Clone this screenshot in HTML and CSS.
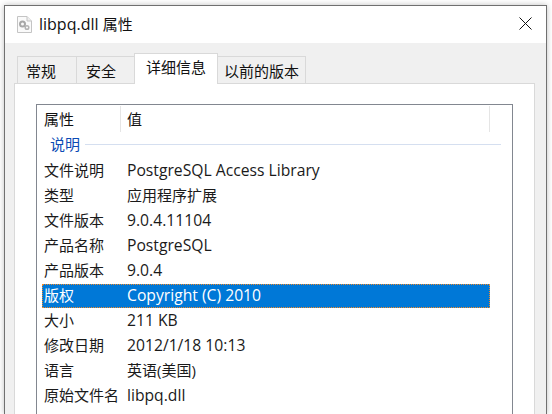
FILE: index.html
```html
<!DOCTYPE html>
<html lang="zh-CN">
<head>
<meta charset="utf-8">
<title>libpq.dll 属性</title>
<link rel="stylesheet" href="styles.css">
</head>
<body>
<div class="window">
  <div class="titlebar">
    <svg class="file-icon" width="15" height="17" viewBox="0 0 15 17">
      <path d="M.5.5H10L14.5 5V16.500H.5Z" fill="#fafafa" stroke="#c4c4c4"/>
      <path d="M10 .5V5H14.500" fill="#eee" stroke="#c4c4c4"/>
      <circle cx="5.500" cy="8" r="2.500" fill="none" stroke="#a8a8a8" stroke-width="2"/>
      <circle cx="10" cy="11.500" r="1.800" fill="none" stroke="#b4b4b4" stroke-width="1.500"/>
    </svg>
    <span class="title">libpq.dll <span class="cjk">属性</span></span>
    <svg class="close" width="13" height="13" viewBox="0 0 13 13">
      <path d="M.5.5L12.500 12.500M12.500.5L.5 12.500" stroke="#111" stroke-width="1" fill="none"/>
    </svg>
  </div>
  <div class="body">
    <div class="tabs">
      <div class="tab t1">常规</div>
      <div class="tab t2">安全</div>
      <div class="tab active">详细信息</div>
      <div class="tab t4">以前的版本</div>
    </div>
    <div class="panel">
      <div class="list">
        <div class="head">
          <div class="hcell c1">属性</div>
          <div class="hcell c2">值</div>
        </div>
        <div class="group"><span>说明</span><i class="rule"></i></div>
        <div class="row"><span class="k">文件说明</span><span class="v">PostgreSQL Access Library</span></div>
        <div class="row"><span class="k">类型</span><span class="v cjk">应用程序扩展</span></div>
        <div class="row"><span class="k">文件版本</span><span class="v">9.0.4.11104</span></div>
        <div class="row"><span class="k">产品名称</span><span class="v">PostgreSQL</span></div>
        <div class="row"><span class="k">产品版本</span><span class="v">9.0.4</span></div>
        <div class="row selected"><span class="k">版权</span><span class="v">Copyright (C) 2010</span></div>
        <div class="row"><span class="k">大小</span><span class="v">211 KB</span></div>
        <div class="row"><span class="k">修改日期</span><span class="v">2012/1/18 10:13</span></div>
        <div class="row"><span class="k">语言</span><span class="v cjk">英语(美国)</span></div>
        <div class="row"><span class="k">原始文件名</span><span class="v">libpq.dll</span></div>
      </div>
    </div>
  </div>
</div>
</body>
</html>
```
FILE: styles.css
```css
html, body { margin: 0; padding: 0; }
body {
  width: 552px;
  height: 414px;
  overflow: hidden;
  background: #fff;
  font-family: "Open Sans", "Noto Sans CJK SC", sans-serif;
  font-size: 15px;
  color: #111;
  padding: 5px 5px 0 4px;
  box-sizing: border-box;
}
.window {
  height: 409px;
  box-sizing: border-box;
  border: 1px solid #707070;
  border-bottom: 0;
  box-shadow: 0 0 6px rgba(0,0,0,.25);
  background: #f0f0f0;
  display: flex;
  flex-direction: column;
}
.titlebar {
  height: 37px;
  flex: none;
  background: #fff;
  display: flex;
  align-items: center;
  padding: 0 0 0 12px;
}
.file-icon { flex: none; margin-right: 7px; }
.title { font-size: 16px; line-height: 20px; flex: 1; color: #111; position: relative; top: -1px; }
.cjk { font-size: 15px; }
.close { flex: none; margin-right: 14px; position: relative; top: -1px; }
.body { flex: 1; display: flex; flex-direction: column; padding: 10px 11px 0 9px; min-height: 0; }
.tabs { display: flex; height: 30px; align-items: flex-end; padding-left: 3px; position: relative; z-index: 1; flex: none; }
.tab {
  height: 27px;
  box-sizing: border-box;
  border: 1px solid #d9d9d9;
  border-bottom: 0;
  background: #f0f0f0;
  line-height: 28px;
  font-size: 15px;
  margin-left: -1px;
}
.t1 { width: 60px; margin-left: 0; padding-left: 8px; }
.t2 { width: 59px; padding-left: 9px; }
.t4 { width: 89px; padding-left: 6px; }
.active {
  width: 84px;
  height: 31px;
  margin-bottom: -1px;
  background: #fff;
  line-height: 27px;
  padding-left: 11px;
  position: relative;
}
.panel {
  flex: 1;
  background: #fff;
  border: 1px solid #d9d9d9;
  border-bottom: 0;
  padding: 20px 21px 0 21px;
  min-height: 0;
}
.list {
  height: 100%;
  box-sizing: border-box;
  border: 1px solid #828790;
  border-bottom: 0;
  padding: 0 0 0 5px;
  background: #fff;
}
.head { display: flex; height: 29px; padding-top: 1px; box-sizing: border-box; margin-right: 22px; }
.hcell { font-size: 15px; line-height: 27px; height: 26px; border-right: 1px solid #e5e5e5; box-sizing: border-box; padding-left: 2px; }
.c1 { width: 79px; }
.c2 { flex: 1; padding-left: 6px; }
.group {
  display: flex;
  align-items: center;
  height: 22px;
  margin-top: -1px;
  margin-bottom: 3px;
  padding-left: 8px;
  margin-right: 11px;
  color: #0b4bb5;
  font-size: 15px;
  line-height: 22px;
}
.rule { flex: 1; height: 1px; background: #d5dff0; margin-left: 5px; }
.row {
  display: flex;
  height: 25px;
  line-height: 25px;
  margin-right: 22px;
  padding-left: 2px;
  color: #1a1a1a;
  white-space: nowrap;
}
.k { width: 83px; flex: none; font-size: 15px; }
.v { font-size: 15.700px; }
.v.cjk { font-size: 15px; }
.selected {
  background: #0078d7;
  color: #fff;
  height: 24px;
  line-height: 22px;
  margin-top: 1px;
  outline: 1px dotted #f08a2a;
  outline-offset: -1px;
}
```
